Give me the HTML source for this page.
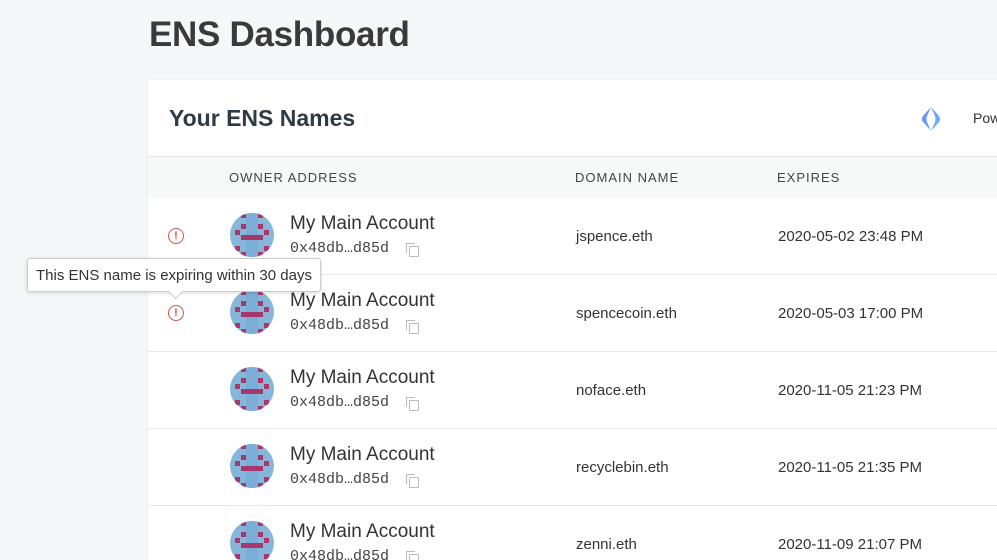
<!DOCTYPE html>
<html><head><meta charset="utf-8"><style>
html,body{margin:0;width:997px;height:560px;overflow:hidden}
body{background:#f6f7f9;font-family:"Liberation Sans",sans-serif;position:relative;color:#333}
h1{position:absolute;left:149px;top:15px;margin:0;font-size:35px;font-weight:bold;color:#3a3a3a;letter-spacing:-0.3px}
.card{position:absolute;left:148px;top:80px;width:900px;height:520px;background:#fff;box-shadow:0 1px 3px rgba(0,0,0,.08)}
.title{position:absolute;left:21px;top:25px;font-size:23px;font-weight:bold;color:#2f3a45}
.pow{position:absolute;left:825px;top:30px;font-size:14px;color:#333}
.hdr{position:absolute;left:0;top:76px;width:900px;height:41px;background:#f7f9f9;border-top:1px solid #e6e8ea;border-bottom:1px solid #e6e8ea;font-size:13px;letter-spacing:1px;color:#444}
.hdr span{position:absolute;top:13px}
.row{position:absolute;left:0;width:900px;height:76px;border-bottom:1px solid #e6e8ea;background:#fff}
.name{position:absolute;left:142px;top:15px;font-size:19px;color:#333}
.addr{position:absolute;left:142px;top:42px;font-family:"Liberation Mono",monospace;font-size:15px;color:#444}
.copy{position:absolute;left:261px;top:48px;width:8px;height:9px;border:1px solid #bbb;border-radius:1px}
.copy:before{content:"";position:absolute;left:-4px;top:-4px;width:8px;height:9px;border-left:1px solid #bbb;border-top:1px solid #bbb}
.dom{position:absolute;left:428px;top:30px;font-size:15px}
.exp{position:absolute;left:630px;top:30px;font-size:15px}
.av{position:absolute;left:82px;top:15px;width:44px;height:44px;border-radius:50%;overflow:hidden;background:#86b6d9}
.av i{position:absolute;background:#a8386c}
.av b{position:absolute;left:16px;top:0;width:12px;height:44px;background:#7aaed6}
.warn{position:absolute;left:20px;top:30px;width:14px;height:14px;border:1.5px solid #d9534f;border-radius:50%;color:#d9534f;font-size:11px;font-weight:bold;text-align:center;line-height:14px}
.tip{position:absolute;left:27px;top:258px;width:294px;height:34px;background:#fff;border:1px solid #ccc;border-radius:3px;box-shadow:0 1px 4px rgba(0,0,0,.15);font-size:15px;line-height:34px;padding-left:8px;box-sizing:border-box;color:#333}
.tip:after{content:"";position:absolute;left:142px;bottom:-6px;width:10px;height:10px;background:#fff;border-right:1px solid #ccc;border-bottom:1px solid #ccc;transform:rotate(45deg)}
</style></head><body>
<h1>ENS Dashboard</h1>
<div class="card">
<div class="title">Your ENS Names</div>
<svg style="position:absolute;left:772px;top:26px" width="22" height="26" viewBox="0 0 22 26"><defs><linearGradient id="g" x1="0" y1="0" x2="1" y2="1"><stop offset="0" stop-color="#6f7ff4"/><stop offset="1" stop-color="#6ac0f6"/></linearGradient></defs><path d="M11 1 L3 10 Q1 13 3 16 L11 25 L7 16 Q6 13 7 10 Z M11 1 L15 10 Q16 13 15 16 L11 25 L19 16 Q21 13 19 10 Z" fill="url(#g)"/></svg>
<div class="pow">Pow</div>
<div class="hdr"><span style="left:81px">OWNER ADDRESS</span><span style="left:427px">DOMAIN NAME</span><span style="left:629px">EXPIRES</span></div>
</div>
<div id="rows"></div>
<div class="tip">This ENS name is expiring within 30 days</div>
<script>
var d=[["jspence.eth","2020-05-02 23:48 PM",1],["spencecoin.eth","2020-05-03 17:00 PM",1],["noface.eth","2020-11-05 21:23 PM",0],["recyclebin.eth","2020-11-05 21:35 PM",0],["zenni.eth","2020-11-09 21:07 PM",0]];
var av='<div class="av"><b></b><i style="left:11px;top:0;width:5px;height:5px"></i><i style="left:28px;top:0;width:5px;height:5px"></i><i style="left:11px;top:11px;width:5px;height:5px"></i><i style="left:28px;top:11px;width:5px;height:5px"></i><i style="left:11px;top:22px;width:22px;height:5px"></i><i style="left:5px;top:17px;width:5px;height:5px"></i><i style="left:34px;top:17px;width:5px;height:5px"></i><i style="left:5px;top:33px;width:5px;height:5px"></i><i style="left:34px;top:33px;width:5px;height:5px"></i><i style="left:11px;top:39px;width:5px;height:5px"></i><i style="left:28px;top:39px;width:5px;height:5px"></i></div>';
var h='';
d.forEach(function(r,i){h+='<div class="row" style="left:148px;top:'+(198+i*77)+'px">'+(r[2]?'<div class="warn">!</div>':'')+av+'<div class="name">My Main Account</div><div class="addr">0x48db…d85d</div><div class="copy"></div><div class="dom">'+r[0]+'</div><div class="exp">'+r[1]+'</div></div>';});
document.getElementById('rows').innerHTML=h;
</script>
</body></html>
